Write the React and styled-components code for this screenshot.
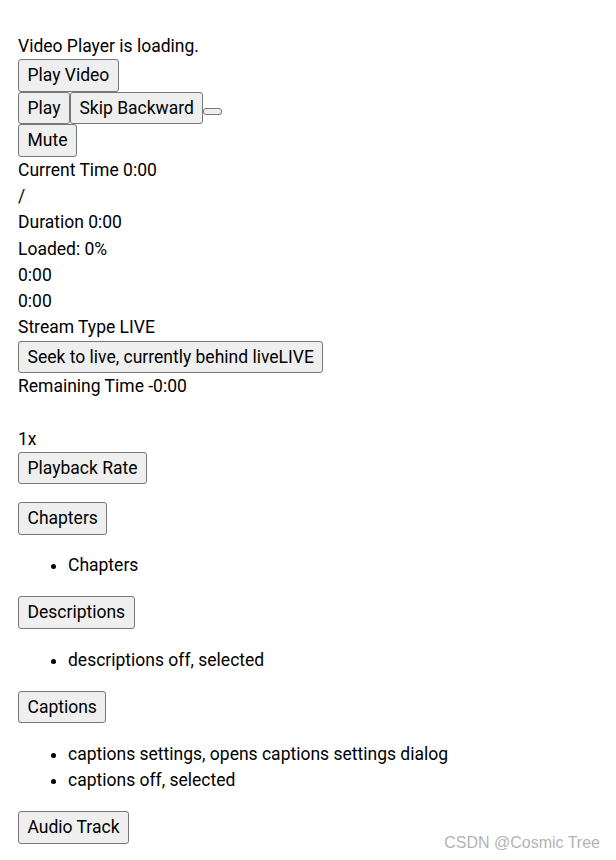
import React from "react";
import { styled, createGlobalStyle } from "styled-components";

const GlobalStyle = createGlobalStyle`
  html, body {
    margin: 0;
    padding: 0;
    background: #fff;
  }
  body {
    font-family: Roboto, "Liberation Sans", sans-serif;
    font-size: 17.5px;
    line-height: 26.25px;
    color: #000;
  }
`;

const Page = styled.div`
  position: relative;
  min-height: 860px;
  padding: 33px 18px 0;
  box-sizing: border-box;
`;

const Line = styled.div`
  min-height: 26.25px;
`;

const Row = styled.div``;

const Button = styled.button`
  font: inherit;
  color: #000;
  line-height: 26.5px;
  padding: 2px 8.5px 2px;
  margin: 0;
  background: #efefef;
  border: 1px solid #767676;
  border-radius: 3px;
  vertical-align: baseline;
  cursor: pointer;
`;

const EmptyButton = styled.button`
  display: inline-block;
  width: 19px;
  height: 7px;
  padding: 0;
  margin: 0;
  background: #efefef;
  border: 1px solid #767676;
  border-radius: 3px;
  vertical-align: baseline;
`;

const Menu = styled.ul`
  margin: 17.75px 0;
  padding-left: 50px;

  li {
    line-height: 26.25px;
  }
`;

const Watermark = styled.div`
  position: absolute;
  right: 16px;
  bottom: 7px;
  font-family: "Liberation Sans", Arial, sans-serif;
  font-size: 16px;
  line-height: 20px;
  color: #b3b3b3;
`;

const App = () => {
  return (
    <>
      <GlobalStyle />
      <Page>
        <Line>Video Player is loading.</Line>
        <Row>
          <Button title="Play Video">Play Video</Button>
        </Row>
        <Row>
          <Button title="Play">Play</Button>
          <Button title="Skip Backward">Skip Backward</Button>
          <EmptyButton aria-label="Skip Forward" />
        </Row>
        <Row>
          <Button title="Mute">Mute</Button>
        </Row>
        <Line>Current Time 0:00</Line>
        <Line>/</Line>
        <Line>Duration 0:00</Line>
        <Line>Loaded: 0%</Line>
        <Line>0:00</Line>
        <Line>0:00</Line>
        <Line>Stream Type LIVE</Line>
        <Row>
          <Button>Seek to live, currently behind liveLIVE</Button>
        </Row>
        <Line>Remaining Time -0:00</Line>
        <Line />
        <Line>1x</Line>
        <Row>
          <Button>Playback Rate</Button>
        </Row>
        <Menu />
        <Row>
          <Button>Chapters</Button>
        </Row>
        <Menu>
          <li>Chapters</li>
        </Menu>
        <Row>
          <Button>Descriptions</Button>
        </Row>
        <Menu>
          <li>descriptions off, selected</li>
        </Menu>
        <Row>
          <Button>Captions</Button>
        </Row>
        <Menu>
          <li>captions settings, opens captions settings dialog</li>
          <li>captions off, selected</li>
        </Menu>
        <Row>
          <Button>Audio Track</Button>
        </Row>
        <Watermark>CSDN @Cosmic Tree</Watermark>
      </Page>
    </>
  );
};

export default App;
